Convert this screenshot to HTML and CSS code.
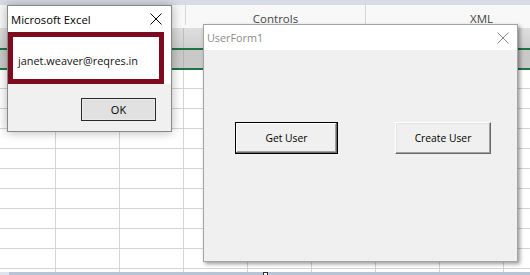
FILE: index.html
```html
<!DOCTYPE html>
<html>
<head>
<meta charset="utf-8">
<link rel="stylesheet" href="styles.css">
</head>
<body>
<div class="excel">
  <div class="strip"></div>
  <div class="ribbon">
    <div class="group g1"></div>
    <div class="group g2">Controls</div>
    <div class="group g3">XML</div>
  </div>
  <div class="colhdr"></div>
  <div class="selrow"></div>
  <div class="grid"></div>
  <div class="status"><span class="status-left"></span><span class="status-mark"></span></div>
</div>

<div class="msgbox">
  <div class="mb-title">
    <span class="mb-caption">Microsoft Excel</span>
    <svg class="mb-close" width="12" height="12" viewBox="0 0 12 12"><path d="M0.5 0.5 L11.5 11.5 M11.5 0.5 L0.5 11.5" stroke="#000" stroke-width="1" fill="none"/></svg>
  </div>
  <div class="mb-body">
    <div class="mb-note">janet.weaver@reqres.in</div>
  </div>
  <div class="mb-footer">
    <button class="mb-ok">OK</button>
  </div>
</div>

<div class="userform">
  <div class="uf-title">
    <span class="uf-caption">UserForm1</span>
    <svg class="uf-close" width="12" height="12" viewBox="0 0 12 12"><path d="M0.5 0.5 L11.5 11.5 M11.5 0.5 L0.5 11.5" stroke="#8a8a8a" stroke-width="1" fill="none"/></svg>
  </div>
  <div class="uf-body">
    <button class="btn btn-default">Get User</button>
    <button class="btn btn-create">Create User</button>
  </div>
</div>
</body>
</html>
```

FILE: styles.css
```css
html, body {
  margin: 0;
  padding: 0;
}
body {
  width: 530px;
  height: 275px;
  overflow: hidden;
  position: relative;
  background: #ffffff;
  font-family: "Open Sans", "Noto Sans", sans-serif;
}

/* ---------- Excel background ---------- */
.excel {
  display: flex;
  flex-direction: column;
  height: 275px;
}
.strip {
  height: 5px;
  background: #d7dce5;
}
.ribbon {
  height: 23px;
  display: flex;
  background: #f8f8f8;
  overflow: hidden;
}
.group {
  flex: none;
  box-sizing: border-box;
  display: flex;
  align-items: center;
  justify-content: center;
  font-size: 11.5px;
  color: #444;
  border-right: 1px solid #d6d6d6;
  margin-bottom: 3px;
  padding-top: 7px;
}
.g1 { width: 186px; }
.g2 { width: 180px; }
.g3 { width: 232px; }

.colhdr {
  height: 20px;
  background-color: #d6d6d6;
  background-image: linear-gradient(to right, #bdbdbd 1px, transparent 1px), linear-gradient(#dedede, #cfcfcf);
  background-size: 64px 100%, 100% 100%;
  background-position: 55px 0, 0 0;
  background-repeat: repeat-x, no-repeat;
}
.selrow {
  height: 18px;
  border-top: 2px solid #217346;
  border-bottom: 2px solid #217346;
  background-color: #c9c9c9;
  background-image: linear-gradient(to right, #b4b4b4 1px, transparent 1px);
  background-size: 64px 100%;
  background-position: 55px 0;
}
.grid {
  flex: 1;
  background-color: #ffffff;
  background-image: linear-gradient(to right, #d4d4d4 1px, transparent 1px), linear-gradient(to bottom, #d4d4d4 1px, transparent 1px);
  background-size: 64px 100%, 100% 20px;
  background-position: 55px 0, 0 18px;
}
.status {
  height: 3px;
  background: #b8c3d5;
  display: flex;
}
.status-left {
  width: 9px;
  background: #dfe4ec;
}
.status-mark {
  width: 5px;
  height: 3px;
  margin-left: 254px;
  box-sizing: border-box;
  border: 1px solid #333;
  border-bottom: none;
  background: #fff;
}

/* ---------- Message box ---------- */
.msgbox {
  position: absolute;
  left: 7px;
  top: 5px;
  width: 163px;
  height: 125px;
  border: 1px solid #888888;
  background: #ffffff;
  box-shadow: 0 0 10px rgba(0, 0, 0, 0.3);
  display: flex;
  flex-direction: column;
}
.mb-title {
  height: 26px;
  display: flex;
  align-items: center;
  justify-content: space-between;
  padding-left: 3px;
  padding-right: 9px;
  font-size: 11.3px;
  color: #000;
}
.mb-close {
  display: block;
}
.mb-body {
  height: 52px;
  display: flex;
  padding-right: 7px;
}
.mb-note {
  flex: 1;
  box-sizing: border-box;
  border: 5px solid #7d0a1f;
  background: #fff;
  display: flex;
  align-items: center;
  padding-left: 5px;
  padding-top: 4px;
  font-size: 10.9px;
  color: #111;
}
.mb-footer {
  flex: 1;
  background: #f0f0f0;
  display: flex;
  justify-content: flex-end;
  align-items: flex-start;
  padding-top: 14px;
  padding-right: 15px;
}
.mb-ok {
  width: 75px;
  height: 23px;
  box-sizing: border-box;
  border: 1px solid #2b2b2b;
  background: #e1e1e1;
  box-shadow: inset 0 0 0 1px #e9e9e9;
  font-family: "Open Sans", "Noto Sans", sans-serif;
  font-size: 11px;
  color: #000;
  padding: 0;
}

/* ---------- UserForm ---------- */
.userform {
  position: absolute;
  left: 203px;
  top: 24px;
  width: 313px;
  height: 236px;
  border: 1px solid #a3a3a3;
  background: #f0f0f0;
  box-shadow: 2px 2px 4px rgba(0, 0, 0, 0.4);
  display: flex;
  flex-direction: column;
}
.uf-title {
  height: 25px;
  background: #ffffff;
  display: flex;
  align-items: center;
  justify-content: space-between;
  padding-left: 3px;
  padding-right: 8px;
  font-size: 10.8px;
  color: #8c8c8c;
}
.uf-close {
  display: block;
}
.uf-body {
  flex: 1;
  display: flex;
  align-items: flex-start;
  padding-top: 72px;
  padding-left: 31px;
}
.btn {
  height: 32px;
  box-sizing: border-box;
  background: #f0f0f0;
  font-family: "Open Sans", "Noto Sans", sans-serif;
  font-size: 10.3px;
  color: #000;
  padding: 0;
}
.btn-default {
  width: 103px;
  border: 1px solid #000;
  box-shadow: inset -1px -1px 0 #696969, inset 1px 1px 0 #ffffff, inset -2px -2px 0 #a0a0a0;
}
.btn-create {
  width: 96px;
  margin-left: 57px;
  border-top: 1px solid #ffffff;
  border-left: 1px solid #ffffff;
  border-right: 1px solid #696969;
  border-bottom: 1px solid #696969;
  box-shadow: inset -1px -1px 0 #a0a0a0, inset 1px 1px 0 #e3e3e3;
}
```
